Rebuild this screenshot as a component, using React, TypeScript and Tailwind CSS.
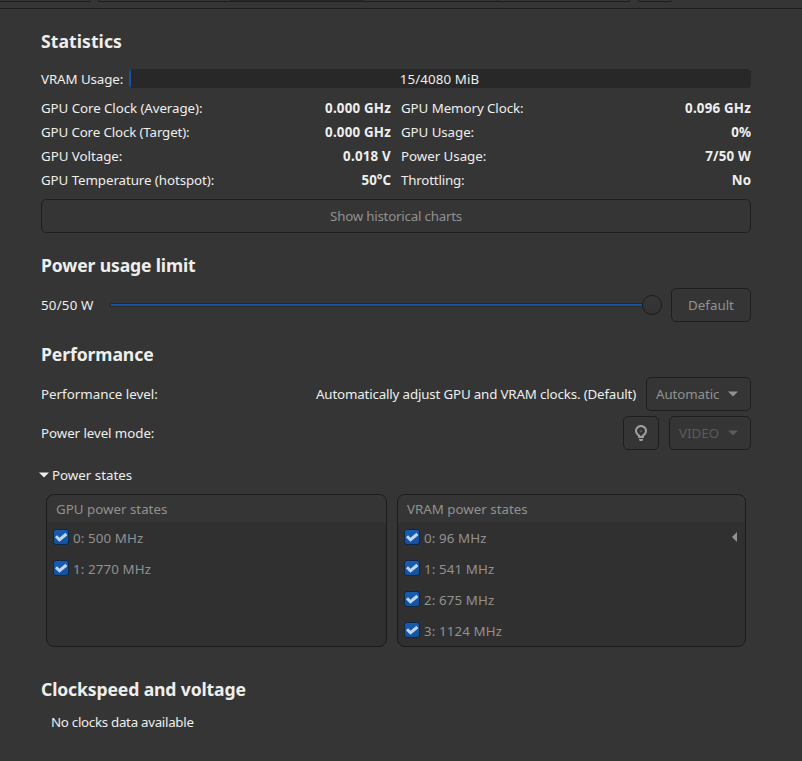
import React from "react";

function Heading({ children, className = "" }: { children: React.ReactNode; className?: string }) {
  return <h2 className={`h-6 text-[17.6px] leading-6 font-bold whitespace-nowrap text-[#eeeeec] ${className}`}>{children}</h2>;
}

function Stat({ label, value, tight = "", wide = "" }: { label: string; value: string; tight?: string; wide?: string }) {
  return (
    <div className="flex h-6 items-center justify-between">
      <span className={tight}>{label}</span>
      <span className={`font-bold ${wide}`}>{value}</span>
    </div>
  );
}

function Arrow() {
  return (
    <svg width="10" height="6" viewBox="0 0 10 6" fill="currentColor">
      <path d="M0 0.5h10L5 5.5z" />
    </svg>
  );
}

function Check({ label, active }: { label: string; active?: boolean }) {
  return (
    <div className="flex h-[31px] items-center pl-1.5">
      <div className="-mt-0.5 flex size-4 items-center justify-center rounded-[3px] border border-[#0c2848] bg-linear-to-b from-[#185cb2] to-[#14519f]">
        <svg width="14" height="14" viewBox="0 0 14 14" fill="none" stroke="#c3d5ec" strokeWidth="3">
          <path d="M2 6.2l3.5 3.5L12.4 4" />
        </svg>
      </div>
      <span className="ml-1 tracking-[0.11px] text-[#919190]">{label}</span>
      {active && (
        <svg className="-mt-0.5 mr-2 ml-auto" width="5" height="10" viewBox="0 0 5 10" fill="#919190">
          <path d="M5 0v10L0 5z" />
        </svg>
      )}
    </div>
  );
}

function StatePanel({ title, states, active, width }: { title: string; states: string[]; active?: number; width: string }) {
  return (
    <div className={`h-[153px] overflow-hidden rounded-lg border border-[#1b1b1b] bg-[#303030] ${width}`}>
      <div className="flex h-[27px] items-center bg-[#353535] pl-[9px] text-[#919190]">{title}</div>
      {states.map((s, i) => (
        <Check key={s} label={s} active={i === active} />
      ))}
    </div>
  );
}

export default function App() {
  return (
    <div className="flex h-[761px] w-[802px] flex-col overflow-hidden bg-[#353535] font-['Noto_Sans',sans-serif] text-[13.333px] leading-[18px] whitespace-nowrap text-[#eeeeec]">
      <header className="flex h-[9px] shrink-0 items-start border-b border-[#1e1e1e]">
        <div className="h-0.5 w-[91px] rounded-br-[3px] border-r border-b border-[#1e1e1e]" />
        <div className="ml-[7px] flex h-0.5 w-[532px] rounded-b-[3px] border-x border-b border-[#1e1e1e]">
          <div className="w-[131px] shrink-0" />
          <div className="w-[134px] shrink-0 border-x border-[#1e1e1e] bg-[#282828]" />
          <div className="w-[134px] shrink-0 border-r border-[#1e1e1e]" />
        </div>
        <div className="ml-2 h-0.5 w-[34px] rounded-b-[3px] border-x border-b border-[#1e1e1e]" />
      </header>
      <main className="flex w-[751px] flex-col pt-5 pl-[41px]">
        <Heading className="tracking-[0.05px]">Statistics</Heading>
        <div className="mt-4 flex h-[19px] items-center">
          <span className="w-[88px] tracking-[-0.09px]">VRAM Usage:</span>
          <div className="flex h-[19px] flex-1 items-center overflow-hidden rounded-[4px] bg-[#282828]">
            <div className="h-full w-0.5 bg-[#15539e]" />
            <span className="flex-1 pr-[3px] text-center tracking-[0.1px]">15/4080 MiB</span>
          </div>
        </div>
        <div className="mt-2 grid grid-cols-2 gap-x-2.5">
          <Stat label="GPU Core Clock (Average):" value="0.000 GHz" tight="tracking-[-0.08px]" wide="tracking-[0.2px]" />
          <Stat label="GPU Memory Clock:" value="0.096 GHz" tight="tracking-[-0.08px]" wide="tracking-[0.2px]" />
          <Stat label="GPU Core Clock (Target):" value="0.000 GHz" tight="tracking-[-0.14px]" wide="tracking-[0.2px]" />
          <Stat label="GPU Usage:" value="0%" tight="tracking-[-0.08px]" />
          <Stat label="GPU Voltage:" value="0.018 V" tight="tracking-[-0.04px]" wide="tracking-[0.22px]" />
          <Stat label="Power Usage:" value="7/50 W" tight="tracking-[-0.04px]" wide="tracking-[0.16px]" />
          <Stat label="GPU Temperature (hotspot):" value="50°C" tight="tracking-[-0.08px]" />
          <Stat label="Throttling:" value="No" tight="tracking-[-0.18px]" />
        </div>
        <button className="mt-[7px] h-[34px] rounded-[5px] border border-[#1e1e1e] tracking-[-0.22px] text-[#919190]">Show historical charts</button>

        <Heading className="mt-5 tracking-[-0.15px]">Power usage limit</Heading>
        <div className="mt-[11px] flex h-[34px] items-center">
          <span className="w-[69px] tracking-[0.2px]">50/50 W</span>
          <div className="flex w-[552px] items-center">
            <div className="h-1 flex-1 rounded-[1px] border border-[#282828] bg-[#15539e]" />
            <div className="-ml-px size-5 rounded-full border border-[#1b1b1b] bg-linear-to-b from-[#373737] to-[#323232]" />
          </div>
          <button className="ml-[9px] h-[34px] w-20 rounded-[5px] border border-[#1e1e1e] text-[#919190]">Default</button>
        </div>

        <Heading className="mt-5 tracking-[-0.1px]">Performance</Heading>
        <div className="mt-[11px] flex h-[34px] items-center">
          <span>Performance level:</span>
          <span className="mr-2.5 ml-auto tracking-[-0.16px]">Automatically adjust GPU and VRAM clocks. (Default)</span>
          <button className="flex h-[34px] w-[105px] items-center justify-between rounded-[5px] border border-[#1e1e1e] pr-3 pl-[9px] text-[#919190]">
            <span className="tracking-[-0.1px]">Automatic</span>
            <Arrow />
          </button>
        </div>
        <div className="mt-[5px] flex h-[34px] items-center">
          <span className="tracking-[-0.07px]">Power level mode:</span>
          <button className="mr-2.5 ml-auto flex h-[34px] w-9 items-center justify-center rounded-[5px] border border-[#1e1e1e] text-[#a0a09f]">
            <svg width="16" height="16" viewBox="0 0 16 16" fill="none">
              <path d="M6.2 12.5V10.6A5 5 0 1 1 9.8 10.6V12.5" stroke="currentColor" strokeWidth="2" />
              <path d="M5.2 11h5.6v2H5.2zM6 14h4v1l-1 1H7l-1-1z" fill="currentColor" />
              <path d="M6.3 5.4h3.4L8 7.4z" fill="currentColor" fillOpacity="0.45" />
            </svg>
          </button>
          <button className="flex h-[34px] w-[82px] items-center justify-between rounded-[5px] border border-[#1e1e1e] pr-3 pl-[9px] text-[#5b5b5b]">
            VIDEO <Arrow />
          </button>
        </div>
        <div className="mt-4 -ml-0.5 flex h-[18px] items-center gap-[3px]">
          <Arrow />
          <span>Power states</span>
        </div>
        <div className="mt-2.5 flex gap-2.5 px-[5px]">
          <StatePanel title="GPU power states" states={["0: 500 MHz", "1: 2770 MHz"]} width="w-[341px]" />
          <StatePanel title="VRAM power states" states={["0: 96 MHz", "1: 541 MHz", "2: 675 MHz", "3: 1124 MHz"]} active={0} width="w-[349px]" />
        </div>

        <Heading className="mt-[30px] tracking-[-0.14px]">Clockspeed and voltage</Heading>
        <p className="mt-3 pl-2.5 tracking-[-0.29px]">No clocks data available</p>
      </main>
    </div>
  );
}
